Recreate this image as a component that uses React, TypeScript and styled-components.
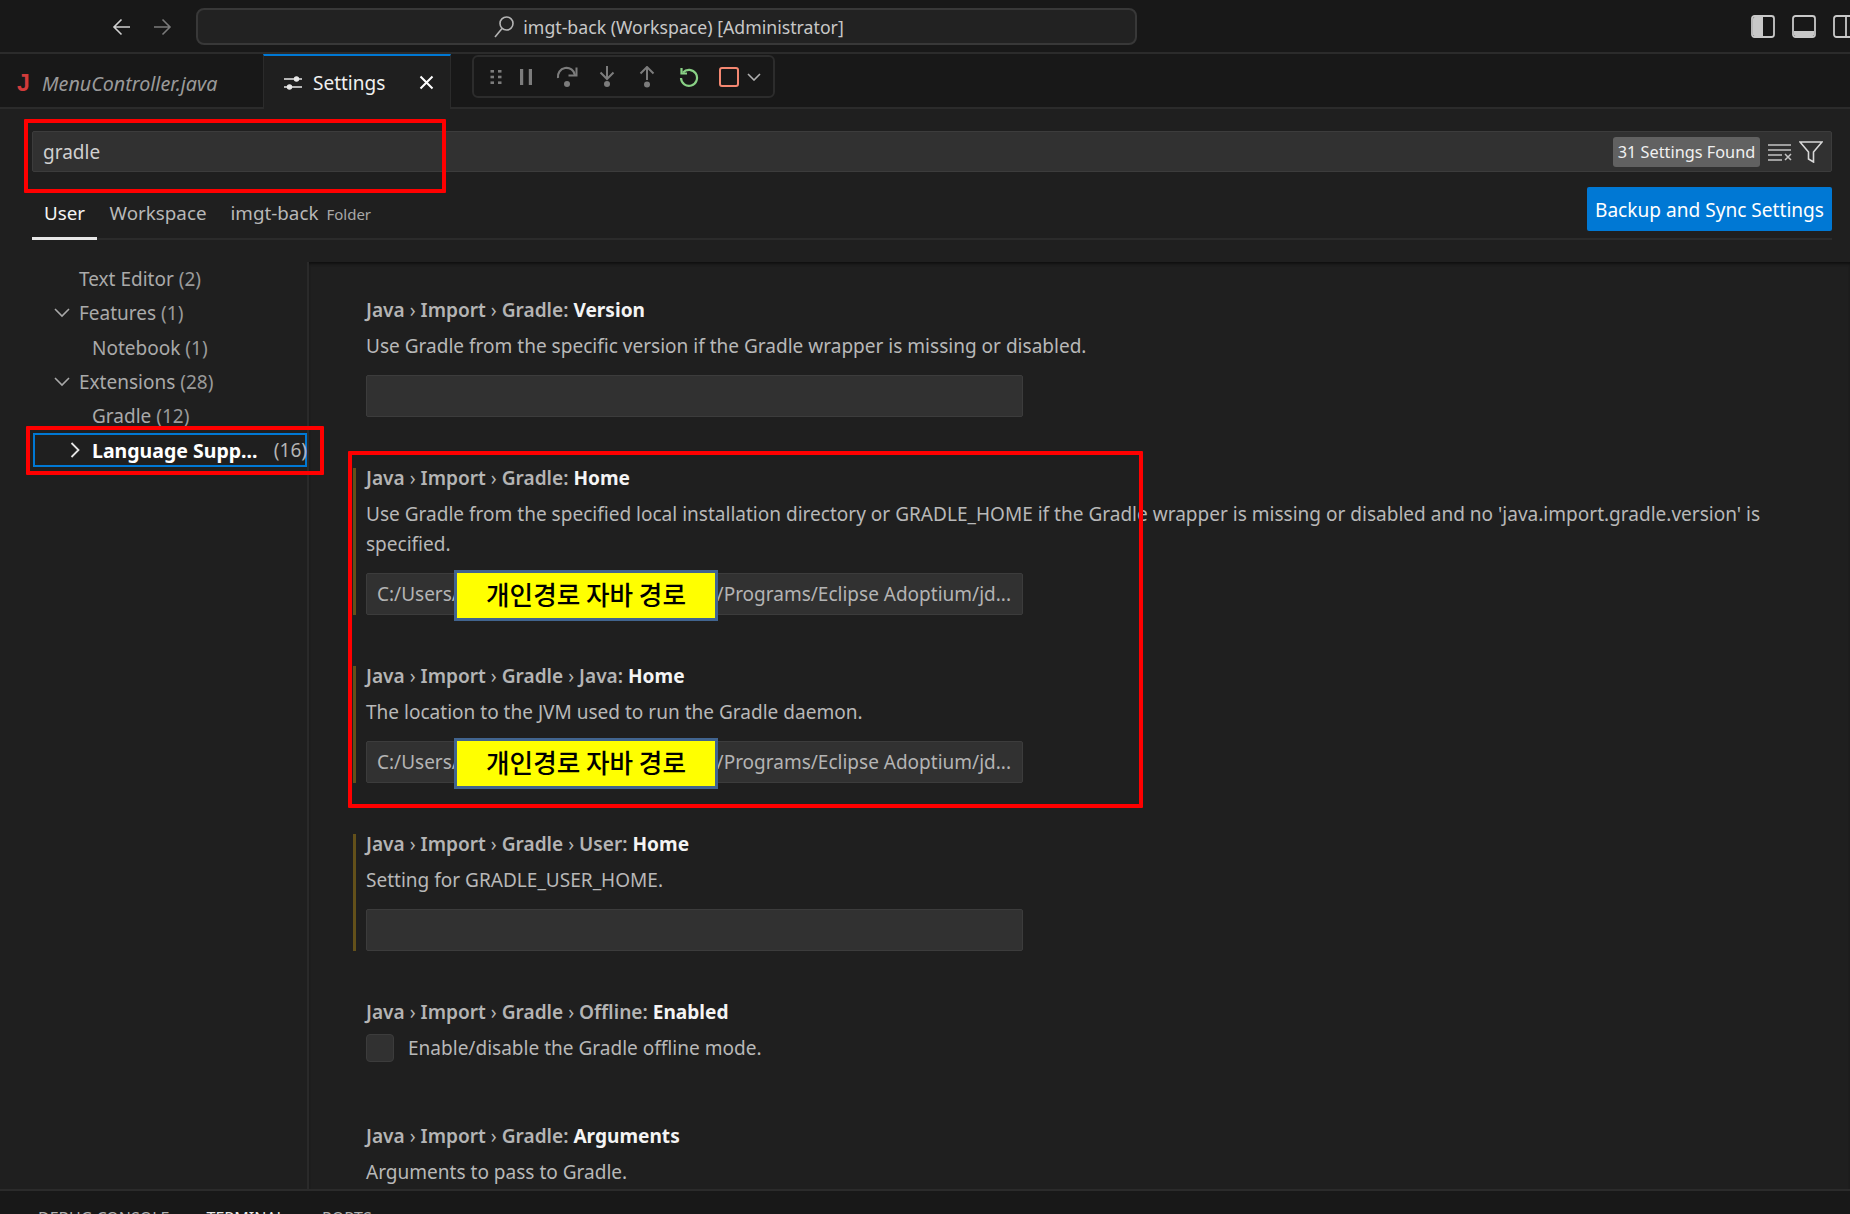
import React from 'react';
import styled, { createGlobalStyle } from 'styled-components';

const GlobalStyle = createGlobalStyle`
  html, body {
    margin: 0;
    padding: 0;
    background: #1f1f1f;
  }
  * {
    box-sizing: border-box;
  }
`;

const FONT = '"Noto Sans", "Noto Sans CJK KR", sans-serif';

interface SettingData {
  path: string[];
  name: string;
  desc: string[];
  value?: boolean;
  modified?: boolean;
}

const treeRows = [
  { label: 'Text Editor', count: 2, indent: 79 },
  { label: 'Features', count: 1, indent: 79, open: true },
  { label: 'Notebook', count: 1, indent: 92 },
  { label: 'Extensions', count: 28, indent: 79, open: true },
  { label: 'Gradle', count: 12, indent: 92 },
];

const Title = ({ path, name }: { path: string[]; name: string }) => (
  <St.SettingTitle>
    {path.map((p, i) => (
      <React.Fragment key={p}>
        {i > 0 && <St.TitleSep>›</St.TitleSep>}
        {p}
      </React.Fragment>
    ))}
    : <St.TitleName>{name}</St.TitleName>
  </St.SettingTitle>
);

const Setting = ({ path, name, desc, value, modified }: SettingData) => (
  <St.SettingItem $modified={modified}>
    <Title path={path} name={name} />
    {desc.map((d) => (
      <St.SettingDesc key={d}>{d}</St.SettingDesc>
    ))}
    <St.SettingInput>
      {value && (
        <>
          <St.InputLeft>C:/Users/</St.InputLeft>
          <St.InputRight>/Programs/Eclipse Adoptium/jd...</St.InputRight>
          <St.Redaction>개인경로 자바 경로</St.Redaction>
        </>
      )}
    </St.SettingInput>
  </St.SettingItem>
);

const App = () => {
  return (
    <St.Page>
      <GlobalStyle />
      <St.TitleBar>
        <St.NavButton $dim={false}>
          <svg width="20" height="20" viewBox="0 0 20 20" fill="none" stroke="#d0d0d0" strokeWidth="1.6">
            <path d="M18 10H2.5M9.5 2.5L2 10l7.5 7.5" />
          </svg>
        </St.NavButton>
        <St.NavButton $dim>
          <svg width="20" height="20" viewBox="0 0 20 20" fill="none" stroke="#7a7a7a" strokeWidth="1.6">
            <path d="M2 10h15.5M10.5 2.5L18 10l-7.5 7.5" />
          </svg>
        </St.NavButton>
        <St.CommandCenter>
          <svg width="22" height="24" viewBox="0 0 22 24" fill="none" stroke="#b4b4b4" strokeWidth="1.6">
            <circle cx="13.5" cy="8.5" r="6.5" />
            <path d="M9 13.5L2 22" />
          </svg>
          imgt-back (Workspace) [Administrator]
        </St.CommandCenter>
        <St.LayoutIcons>
          <svg width="24" height="23" viewBox="0 0 24 23" fill="none">
            <rect x="1" y="1" width="22" height="21" rx="2.5" stroke="#c8c8c8" strokeWidth="1.8" />
            <path d="M2 3.5A1.5 1.5 0 0 1 3.5 2H12v19H3.5A1.5 1.5 0 0 1 2 19.5z" fill="#c8c8c8" />
          </svg>
          <svg width="24" height="23" viewBox="0 0 24 23" fill="none">
            <rect x="1" y="1" width="22" height="21" rx="2.5" stroke="#c8c8c8" strokeWidth="1.8" />
            <path d="M2 16h20v3.5a1.5 1.5 0 0 1-1.5 1.5h-17A1.5 1.5 0 0 1 2 19.5z" fill="#c8c8c8" />
          </svg>
          <svg width="24" height="23" viewBox="0 0 24 23" fill="none">
            <rect x="1" y="1" width="22" height="21" rx="2.5" stroke="#c8c8c8" strokeWidth="1.8" />
            <path d="M13 1v21" stroke="#c8c8c8" strokeWidth="1.8" />
          </svg>
        </St.LayoutIcons>
      </St.TitleBar>

      <St.TabBar>
        <St.Tab $active={false}>
          <St.JavaIcon>J</St.JavaIcon>
          <St.TabItalic>MenuController.java</St.TabItalic>
        </St.Tab>
        <St.Tab $active>
          <svg width="18" height="16" viewBox="0 0 18 16" fill="none" stroke="#e8e8e8" strokeWidth="1.4">
            <path d="M0 4h10M15 4h3M0 12h3M8 12h10" />
            <circle cx="12.5" cy="4" r="2" fill="#e8e8e8" />
            <circle cx="5.5" cy="12" r="2" fill="#e8e8e8" />
          </svg>
          <St.TabLabel>Settings</St.TabLabel>
          <svg width="15" height="15" viewBox="0 0 15 15" fill="none" stroke="#ffffff" strokeWidth="2">
            <path d="M1.5 1.5l12 12M13.5 1.5l-12 12" />
          </svg>
        </St.Tab>
        <St.DebugToolbar>
          <St.DebugIcon $ml={0} width="12" height="16" viewBox="0 0 12 16" fill="#7c7c7c">
            <rect x="0.5" y="1" width="3.5" height="2.6" />
            <rect x="8" y="1" width="3.5" height="2.6" />
            <rect x="0.5" y="6.7" width="3.5" height="2.6" />
            <rect x="8" y="6.7" width="3.5" height="2.6" />
            <rect x="0.5" y="12.4" width="3.5" height="2.6" />
            <rect x="8" y="12.4" width="3.5" height="2.6" />
          </St.DebugIcon>
          <St.DebugIcon $ml={18} width="12" height="16" viewBox="0 0 12 16" fill="#7c7c7c">
            <rect x="0" y="0" width="3.2" height="16" />
            <rect x="8.8" y="0" width="3.2" height="16" />
          </St.DebugIcon>
          <St.DebugIcon $ml={24} width="22" height="22" viewBox="0 0 22 22" fill="none" stroke="#7c7c7c" strokeWidth="2.2">
            <path d="M2 12a8.5 8.5 0 0 1 17-3" />
            <path d="M20.5 1.5v8h-8" strokeWidth="2" />
            <circle cx="11" cy="18" r="3" fill="#7c7c7c" stroke="none" />
          </St.DebugIcon>
          <St.DebugIcon $ml={21} width="16" height="22" viewBox="0 0 16 22" fill="none" stroke="#7c7c7c" strokeWidth="2">
            <path d="M8 0v12M1.5 6.5L8 13l6.5-6.5" />
            <circle cx="8" cy="18" r="3" fill="#7c7c7c" stroke="none" />
          </St.DebugIcon>
          <St.DebugIcon $ml={24} width="16" height="22" viewBox="0 0 16 22" fill="none" stroke="#7c7c7c" strokeWidth="2">
            <path d="M8 14V1M1.5 7.5L8 1l6.5 6.5" />
            <circle cx="8" cy="18.5" r="3" fill="#7c7c7c" stroke="none" />
          </St.DebugIcon>
          <St.DebugIcon $ml={24} width="20" height="20" viewBox="0 0 20 20" fill="none" stroke="#89d185" strokeWidth="2.2">
            <path d="M4 5.5a8 8 0 1 1-2 5.5" />
            <path d="M2.5 1v5.5H8" />
          </St.DebugIcon>
          <St.DebugIcon $ml={20} width="20" height="20" viewBox="0 0 20 20" fill="none" stroke="#f48771" strokeWidth="2">
            <rect x="1" y="1" width="18" height="18" rx="2" />
          </St.DebugIcon>
          <St.DebugIcon $ml={8} width="14" height="8" viewBox="0 0 14 8" fill="none" stroke="#b0b0b0" strokeWidth="1.6">
            <path d="M1 1l6 6 6-6" />
          </St.DebugIcon>
        </St.DebugToolbar>
      </St.TabBar>

      <St.Header>
        <St.SearchRow>
          <St.SearchBox>
            <St.SearchText>gradle</St.SearchText>
            <St.CountBadge>31 Settings Found</St.CountBadge>
            <St.SearchIcons>
              <svg width="24" height="18" viewBox="0 0 24 18" fill="none" stroke="#c4c4c4" strokeWidth="1.5">
                <path d="M0 2h23M0 7h23M0 12h14M0 17h14" />
                <path d="M17 11l6 6M23 11l-6 6" />
              </svg>
              <svg width="24" height="22" viewBox="0 0 24 22" fill="none" stroke="#d8d8d8" strokeWidth="1.6">
                <path d="M1 1h22l-8.5 10v10l-5-3v-7z" />
              </svg>
            </St.SearchIcons>
          </St.SearchBox>
          <St.RedFrame $variant="search" />
        </St.SearchRow>
        <St.ScopeRow>
          <St.ScopeTab $active>User</St.ScopeTab>
          <St.ScopeTab>Workspace</St.ScopeTab>
          <St.ScopeTab>
            imgt-back<St.ScopeHint>Folder</St.ScopeHint>
          </St.ScopeTab>
          <St.SyncButton>Backup and Sync Settings</St.SyncButton>
        </St.ScopeRow>
      </St.Header>

      <St.Body>
        <St.Tree>
          {treeRows.map((r) => (
            <St.TreeRow key={r.label} style={{ paddingLeft: r.indent }}>
              {r.open && (
                <St.TreeChevron width="16" height="10" viewBox="0 0 16 10" fill="none" stroke="#a8a8a8" strokeWidth="1.6">
                  <path d="M1 1l7 7 7-7" />
                </St.TreeChevron>
              )}
              {r.label} <St.TreeCount>({r.count})</St.TreeCount>
            </St.TreeRow>
          ))}
          <St.TreeFocusWrap>
            <St.TreeFocusRow>
              <svg width="10" height="16" viewBox="0 0 10 16" fill="none" stroke="#e6e6e6" strokeWidth="1.8">
                <path d="M1.5 1l7 7-7 7" />
              </svg>
              <St.TreeBold>Language Supp...</St.TreeBold>
              <St.TreeFocusCount>(16)</St.TreeFocusCount>
            </St.TreeFocusRow>
            <St.RedFrame $variant="tree" />
          </St.TreeFocusWrap>
        </St.Tree>

        <St.SettingsList>
          <Setting
            path={['Java', 'Import', 'Gradle']}
            name="Version"
            desc={['Use Gradle from the specific version if the Gradle wrapper is missing or disabled.']}
          />
          <St.MarkedGroup>
            <Setting
              modified
              value
              path={['Java', 'Import', 'Gradle']}
              name="Home"
              desc={[
                "Use Gradle from the specified local installation directory or GRADLE_HOME if the Gradle wrapper is missing or disabled and no 'java.import.gradle.version' is",
                'specified.',
              ]}
            />
            <Setting
              modified
              value
              path={['Java', 'Import', 'Gradle', 'Java']}
              name="Home"
              desc={['The location to the JVM used to run the Gradle daemon.']}
            />
            <St.RedFrame $variant="settings" />
          </St.MarkedGroup>
          <Setting
            modified
            path={['Java', 'Import', 'Gradle', 'User']}
            name="Home"
            desc={['Setting for GRADLE_USER_HOME.']}
          />
          <St.CheckItem>
            <Title path={['Java', 'Import', 'Gradle', 'Offline']} name="Enabled" />
            <St.CheckRow>
              <St.CheckBox />
              <St.SettingDesc>Enable/disable the Gradle offline mode.</St.SettingDesc>
            </St.CheckRow>
          </St.CheckItem>
          <St.LastItem>
            <Title path={['Java', 'Import', 'Gradle']} name="Arguments" />
            <St.SettingDesc>Arguments to pass to Gradle.</St.SettingDesc>
          </St.LastItem>
        </St.SettingsList>
      </St.Body>

      <St.Panel>
        <St.PanelTab>DEBUG CONSOLE</St.PanelTab>
        <St.PanelTab $active>TERMINAL</St.PanelTab>
        <St.PanelTab>PORTS</St.PanelTab>
      </St.Panel>
    </St.Page>
  );
};

const St = {
  Page: styled.div`
    position: relative;
    display: flex;
    flex-direction: column;
    width: 1850px;
    height: 1214px;
    overflow: hidden;
    background: #1f1f1f;
    color: #cccccc;
    font-family: ${FONT};
    font-size: 19px;
  `,

  TitleBar: styled.div`
    display: flex;
    align-items: center;
    flex-shrink: 0;
    height: 54px;
    padding: 1px 0 0 112px;
    background: #181818;
    border-bottom: 2px solid #2b2b2b;
  `,

  NavButton: styled.div<{ $dim: boolean }>`
    display: flex;
    margin-right: ${(p) => (p.$dim ? '24px' : '20px')};
  `,

  CommandCenter: styled.div`
    display: flex;
    align-items: center;
    justify-content: center;
    gap: 8px;
    width: 941px;
    height: 37px;
    padding-left: 4px;
    background: #222222;
    border: 2px solid #383838;
    border-radius: 8px;
    color: #c8c8c8;
    font-size: 17.7px;
  `,

  LayoutIcons: styled.div`
    display: flex;
    gap: 17px;
    margin-left: auto;
    margin-right: -7px;
  `,

  TabBar: styled.div`
    display: flex;
    flex-shrink: 0;
    height: 55px;
    background: #181818;
    border-bottom: 2px solid #2b2b2b;
  `,

  Tab: styled.div<{ $active: boolean }>`
    display: flex;
    align-items: center;
    height: ${(p) => (p.$active ? '55px' : '53px')};
    width: ${(p) => (p.$active ? '188px' : '263px')};
    padding-left: ${(p) => (p.$active ? '20px' : '17px')};
    padding-top: ${(p) => (p.$active ? '0' : '3px')};
    background: ${(p) => (p.$active ? '#1f1f1f' : '#181818')};
    border-top: 2px solid ${(p) => (p.$active ? '#0078d4' : 'transparent')};
    border-right: ${(p) => (p.$active ? '1px solid #2b2b2b' : 'none')};
    border-left: ${(p) => (p.$active ? '1px solid #2b2b2b' : 'none')};
    z-index: 1;
  `,

  JavaIcon: styled.span`
    width: 25px;
    color: #d13b3b;
    font-family: 'Liberation Sans', sans-serif;
    font-weight: 700;
    font-size: 23px;
  `,

  TabItalic: styled.span`
    color: #9a9a9a;
    font-style: italic;
    font-size: 19.7px;
  `,

  TabLabel: styled.span`
    width: 106px;
    margin-left: 11px;
    color: #f0f0f0;
    font-size: 19px;
  `,

  DebugToolbar: styled.div`
    display: flex;
    align-items: center;
    width: 303px;
    height: 43px;
    margin: 1px 0 0 21px;
    padding-left: 16px;
    background: #181818;
    border: 2px solid #2c2c2c;
    border-radius: 6px;
  `,

  DebugIcon: styled.svg<{ $ml: number }>`
    flex-shrink: 0;
    margin-left: ${(p) => p.$ml}px;
  `,

  Header: styled.div`
    flex-shrink: 0;
    padding: 22px 18px 0 32px;
  `,

  SearchRow: styled.div`
    position: relative;
  `,

  SearchBox: styled.div`
    display: flex;
    align-items: center;
    height: 41px;
    padding: 0 8px 0 10px;
    background: #313131;
    border: 1px solid #3c3c3c;
    border-radius: 2px;
  `,

  SearchText: styled.span`
    color: #d0d0d0;
    font-size: 19px;
    flex-grow: 1;
  `,

  CountBadge: styled.span`
    display: flex;
    align-items: center;
    justify-content: center;
    width: 147px;
    height: 30px;
    background: #616161;
    border-radius: 3px;
    color: #f0f0f0;
    font-size: 16.3px;
  `,

  SearchIcons: styled.div`
    display: flex;
    align-items: center;
    gap: 7px;
    margin-left: 8px;
  `,

  RedFrame: styled.div<{ $variant: 'search' | 'tree' | 'settings' }>`
    position: absolute;
    border: 4px solid #ff0000;
    border-radius: 1px;
    pointer-events: none;
    z-index: 5;
    ${(p) =>
      p.$variant === 'search' &&
      `left: -8px; top: -12px; width: 422px; height: 74px;`}
    ${(p) =>
      p.$variant === 'tree' &&
      `left: -7px; top: -7px; width: 298px; height: 49px;`}
    ${(p) =>
      p.$variant === 'settings' &&
      `left: -18px; top: -17px; width: 795px; height: 357px;`}
  `,

  ScopeRow: styled.div`
    display: flex;
    align-items: flex-start;
    height: 53px;
    margin-top: 15px;
    border-bottom: 2px solid #2b2b2b;
  `,

  ScopeTab: styled.div<{ $active?: boolean }>`
    height: 53px;
    padding: 0 12px;
    margin-right: ${(p) => (p.$active ? '0.5px' : '0')};
    line-height: 53px;
    color: ${(p) => (p.$active ? '#f4f4f4' : '#b8b8b8')};
    border-bottom: 3px solid ${(p) => (p.$active ? '#e7e7e7' : 'transparent')};
    font-size: 18.8px;
  `,

  ScopeHint: styled.span`
    margin-left: 8px;
    font-size: 15px;
    color: #a8a8a8;
  `,

  SyncButton: styled.div`
    display: flex;
    align-items: center;
    justify-content: center;
    width: 245px;
    height: 44px;
    margin-left: auto;
    padding-top: 1px;
    background: #0078d4;
    border-radius: 2px;
    color: #ffffff;
    font-size: 19.1px;
  `,

  Body: styled.div`
    flex-grow: 1;
    display: flex;
    overflow: hidden;
  `,

  Tree: styled.div`
    flex-shrink: 0;
    width: 307px;
    padding-top: 22px;
  `,

  TreeRow: styled.div`
    position: relative;
    display: flex;
    align-items: center;
    height: 34.3px;
    color: #aaaaaa;
    font-size: 19px;
    white-space: pre;
  `,

  TreeChevron: styled.svg`
    position: absolute;
    left: 54px;
    top: 12px;
  `,

  TreeCount: styled.span`
    color: #9a9a9a;
  `,

  TreeFocusWrap: styled.div`
    position: relative;
    margin: 0 0 0 33px;
  `,

  TreeFocusRow: styled.div`
    display: flex;
    align-items: center;
    height: 34px;
    padding-left: 35px;
    border: 2px solid #0078d4;
  `,

  TreeBold: styled.span`
    margin-left: 12px;
    color: #ffffff;
    font-weight: 700;
    font-size: 19.5px;
  `,

  TreeFocusCount: styled.span`
    margin-left: auto;
    margin-right: -2px;
    color: #b4b4b4;
  `,

  SettingsList: styled.div`
    flex-grow: 1;
    margin-top: 22px;
    padding: 38px 0 0 57px;
    border-left: 2px solid #2a2a2a;
    box-shadow: inset 0 3px 3px -1px #0f0f0f;
  `,

  MarkedGroup: styled.div`
    position: relative;
    width: 1470px;
  `,

  SettingItem: styled.div<{ $modified?: boolean }>`
    position: relative;
    width: 1470px;
    margin-bottom: 51px;
    &::before {
      content: '';
      display: ${(p) => (p.$modified ? 'block' : 'none')};
      position: absolute;
      left: -13px;
      top: 0;
      bottom: 0;
      width: 3px;
      background: #63501a;
    }
  `,

  SettingTitle: styled.div`
    height: 20px;
    margin-bottom: 12px;
    line-height: 20px;
    color: #b4b4b4;
    font-weight: 600;
    font-size: 19.1px;
    white-space: pre;
  `,

  TitleSep: styled.span`
    margin: 0 5px;
    font-weight: 400;
  `,

  TitleName: styled.span`
    color: #f4f4f4;
    font-weight: 700;
  `,

  SettingDesc: styled.div`
    height: 29.5px;
    line-height: 29.5px;
    color: #b8b8b8;
    font-size: 19.05px;
    white-space: nowrap;
  `,

  SettingInput: styled.div`
    position: relative;
    display: flex;
    justify-content: space-between;
    align-items: center;
    width: 657px;
    height: 42px;
    margin-top: 13.5px;
    padding: 0 11px 0 10px;
    background: #313131;
    border: 1px solid #3c3c3c;
    border-radius: 2px;
    color: #b4b4b4;
    font-size: 19px;
    white-space: nowrap;
  `,

  InputLeft: styled.span``,

  InputRight: styled.span``,

  Redaction: styled.div`
    position: absolute;
    left: 87px;
    top: -4px;
    display: flex;
    align-items: center;
    justify-content: center;
    width: 264px;
    height: 51px;
    padding-bottom: 3px;
    background: #ffff00;
    border: 3.5px solid #41648f;
    color: #000000;
    font-family: 'Noto Sans CJK KR', sans-serif;
    font-weight: 500;
    font-size: 25.6px;
  `,

  CheckItem: styled.div`
    margin-bottom: 63px;
  `,

  CheckRow: styled.div`
    display: flex;
    align-items: center;
    gap: 14px;
    margin-top: 2px;
  `,

  CheckBox: styled.div`
    width: 28px;
    height: 28px;
    background: #313131;
    border: 1px solid #3c3c3c;
    border-radius: 4px;
  `,

  LastItem: styled.div``,

  Panel: styled.div`
    flex-shrink: 0;
    display: flex;
    align-items: flex-start;
    gap: 37px;
    height: 25px;
    padding: 18px 0 0 38px;
    overflow: hidden;
    background: #181818;
    border-top: 2px solid #2b2b2b;
  `,

  PanelTab: styled.span<{ $active?: boolean }>`
    color: ${(p) => (p.$active ? '#e7e7e7' : '#b0b0b0')};
    font-size: 16px;
    line-height: 18px;
    white-space: nowrap;
  `,
};

export default App;
